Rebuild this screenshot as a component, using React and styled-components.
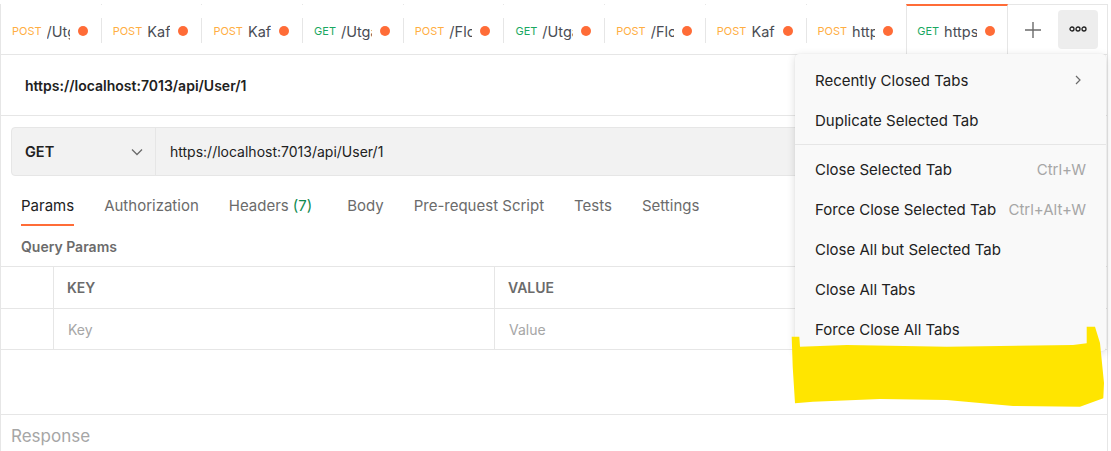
import React from 'react'
import styled, { createGlobalStyle } from 'styled-components'

const GlobalStyle = createGlobalStyle`
  body {
    margin: 0;
    background: #fff;
    font-family: Inter, "Noto Sans", sans-serif;
    color: #212121;
  }
  * { box-sizing: border-box; }
`

const Page = styled.div`
  position: relative;
  width: 1111px;
  height: 451px;
  overflow: hidden;
  padding-top: 4px;
  background: #fff;
`

const Frame = styled.div`
  width: 1108px;
  height: 447px;
  border-top: 1px solid #e6e6e6;
  border-left: 1px solid #e6e6e6;
  border-right: 1px solid #e6e6e6;
  display: flex;
  flex-direction: column;
`

const TabBar = styled.div`
  display: flex;
  align-items: stretch;
  height: 50px;
  flex: 0 0 50px;
  border-bottom: 1px solid #e6e6e6;
`

const Tab = styled.div`
  flex: 0 0 ${({ active }) => (active ? '101.7px' : '99.7px')};
  min-width: 0;
  overflow: hidden;
  display: flex;
  align-items: center;
  gap: 5px;
  padding: 2px 12px 0 10px;
  margin-top: -1px;
  border-top: 2px solid ${({ active }) => (active ? '#ff6c37' : 'transparent')};
  border-left: 1px solid ${({ active }) => (active ? '#e6e6e6' : 'transparent')};
  border-right: 1px solid ${({ active }) => (active ? '#e6e6e6' : 'transparent')};
  background: #fff;
`

const Separator = styled.div`
  flex: 0 0 1px;
  align-self: center;
  height: 25px;
  margin-top: 2px;
  background: #e6e6e6;
`

const Method = styled.span`
  flex: 0 0 auto;
  font-size: 11px;
  color: ${({ type }) => (type === 'GET' ? '#1aa861' : '#ffae42')};
`

const TabName = styled.span`
  flex: 1 1 0;
  min-width: 0;
  font-size: 14.5px;
  color: #4a4d55;
  white-space: nowrap;
  overflow: hidden;
`

const Dot = styled.span`
  flex: 0 0 10px;
  height: 10px;
  margin-left: 3px;
  border-radius: 50%;
  background: #ff6c37;
`

const PlusButton = styled.div`
  flex: 0 0 50px;
  display: flex;
  align-items: center;
  justify-content: center;
`

const MoreButton = styled.div`
  flex: 0 0 40px;
  height: 39px;
  align-self: center;
  margin-top: -1px;
  border-radius: 4px;
  background: #ededed;
  display: flex;
  align-items: center;
  justify-content: center;
`

const TitleRow = styled.div`
  flex: 0 0 61px;
  display: flex;
  align-items: center;
  padding-left: 24px;
  border-bottom: 1px solid #e6e6e6;
  font-size: 14px;
  font-weight: 600;
  color: #212121;
`

const UrlSection = styled.div`
  padding: 11px 11px 0 10px;
`

const UrlBar = styled.div`
  display: flex;
  height: 49px;
  border: 1px solid #e6e6e6;
  border-radius: 4px;
  background: #f2f2f2;
`

const MethodSelect = styled.div`
  flex: 0 0 144px;
  display: flex;
  align-items: center;
  justify-content: space-between;
  padding: 0 12px 0 13px;
  border-right: 1px solid #e6e6e6;
  font-size: 14.5px;
  font-weight: 600;
  color: #212121;
`

const UrlInput = styled.div`
  flex: 1;
  display: flex;
  align-items: center;
  padding-left: 14px;
  font-size: 14px;
  color: #212121;
`

const ReqTabs = styled.div`
  display: flex;
  gap: 30px;
  height: 40px;
  margin-top: 10px;
  padding-left: 20px;
`

const ReqTab = styled.div`
  display: flex;
  align-items: center;
  padding-top: 1px;
  font-size: 15px;
  color: ${({ active }) => (active ? '#212121' : '#6b6b6b')};
  border-bottom: 2px solid ${({ active }) => (active ? '#ff6c37' : 'transparent')};
  margin-right: ${({ extra }) => extra || 0}px;
`

const Count = styled.span`
  color: #0f8a4f;
  margin-left: 4px;
`

const SectionLabel = styled.div`
  height: 40px;
  display: flex;
  align-items: center;
  padding-left: 20px;
  padding-top: 1px;
  font-size: 14px;
  font-weight: 600;
  color: #6b6b6b;
`

const Table = styled.div`
  display: grid;
  grid-template-columns: 53px 441px 1fr;
  border-top: 1px solid #e6e6e6;
`

const Cell = styled.div`
  height: ${({ head }) => (head ? '42px' : '41px')};
  display: flex;
  align-items: center;
  padding-left: ${({ head }) => (head ? '13px' : '14px')};
  border-bottom: 1px solid #e6e6e6;
  border-right: ${({ last }) => (last ? 'none' : '1px solid #e6e6e6')};
  font-size: 14px;
  font-weight: ${({ head }) => (head ? 600 : 400)};
  color: ${({ head }) => (head ? '#6b6b6b' : '#a6a6a6')};
`

const Spacer = styled.div`
  flex: 0 0 64px;
`

const ResponsePane = styled.div`
  flex: 1;
  border-top: 1px solid #e6e6e6;
  display: flex;
  align-items: center;
  padding: 5px 0 0 10px;
  font-size: 17px;
  color: #a6a6a6;
`

const Menu = styled.div`
  position: absolute;
  left: 795px;
  top: 54px;
  width: 311px;
  padding: 6px 0 2px;
  background: #f9f9f9;
  border-radius: 4px;
  box-shadow: 0 2px 8px rgba(0, 0, 0, 0.14), 0 0 1px rgba(0, 0, 0, 0.12);
`

const MenuItem = styled.div`
  height: 40px;
  display: flex;
  align-items: center;
  justify-content: space-between;
  padding: 0 20px;
  font-size: 15px;
  color: #212121;
`

const Shortcut = styled.span`
  color: #a6a6a6;
`

const MenuDivider = styled.div`
  height: 1px;
  margin: 4px 0;
  background: #e6e6e6;
`

const Highlight = styled.svg`
  position: absolute;
  left: 0;
  top: 0;
  pointer-events: none;
`

const tabs = [
  { m: 'POST', n: '/Utgang' },
  { m: 'POST', n: 'Kafka' },
  { m: 'POST', n: 'Kafka' },
  { m: 'GET', n: '/Utgang' },
  { m: 'POST', n: '/Flow' },
  { m: 'GET', n: '/Utgang' },
  { m: 'POST', n: '/Flow' },
  { m: 'POST', n: 'Kafka' },
  { m: 'POST', n: 'https://localhost' },
  { m: 'GET', n: 'https://localhost', active: true },
]

const menuItems = [
  { label: 'Recently Closed Tabs', arrow: true },
  { label: 'Duplicate Selected Tab', divider: true },
  { label: 'Close Selected Tab', key: 'Ctrl+W' },
  { label: 'Force Close Selected Tab', key: 'Ctrl+Alt+W' },
  { label: 'Close All but Selected Tab' },
  { label: 'Close All Tabs' },
  { label: 'Force Close All Tabs' },
]

const App = () => {
  return (
    <Page>
      <GlobalStyle />
      <Frame>
        <TabBar>
          {tabs.map((t, i) => (
            <React.Fragment key={i}>
              {i > 0 && !t.active && <Separator />}
              <Tab active={t.active}>
                <Method type={t.m}>{t.m}</Method>
                <TabName>{t.n}</TabName>
                <Dot />
              </Tab>
            </React.Fragment>
          ))}
          <PlusButton>
            <svg width="18" height="18" viewBox="0 0 18 18">
              <path d="M9 1v16M1 9h16" stroke="#6b6b6b" strokeWidth="1.4" fill="none" />
            </svg>
          </PlusButton>
          <MoreButton>
            <svg width="20" height="6" viewBox="0 0 20 6">
              <circle cx="4" cy="3" r="2" stroke="#212121" strokeWidth="1.3" fill="none" />
              <circle cx="10" cy="3" r="2" stroke="#212121" strokeWidth="1.3" fill="none" />
              <circle cx="16" cy="3" r="2" stroke="#212121" strokeWidth="1.3" fill="none" />
            </svg>
          </MoreButton>
        </TabBar>

        <TitleRow>https://localhost:7013/api/User/1</TitleRow>

        <UrlSection>
          <UrlBar>
            <MethodSelect>
              GET
              <svg width="12" height="8" viewBox="0 0 12 8">
                <path d="M1 1.5l5 5 5-5" stroke="#6b6b6b" strokeWidth="1.3" fill="none" />
              </svg>
            </MethodSelect>
            <UrlInput>https://localhost:7013/api/User/1</UrlInput>
          </UrlBar>
        </UrlSection>

        <ReqTabs>
          <ReqTab active>Params</ReqTab>
          <ReqTab>Authorization</ReqTab>
          <ReqTab extra={5}>Headers<Count>(7)</Count></ReqTab>
          <ReqTab>Body</ReqTab>
          <ReqTab>Pre-request Script</ReqTab>
          <ReqTab>Tests</ReqTab>
          <ReqTab>Settings</ReqTab>
        </ReqTabs>

        <SectionLabel>Query Params</SectionLabel>

        <Table>
          <Cell head />
          <Cell head>KEY</Cell>
          <Cell head last>VALUE</Cell>
          <Cell />
          <Cell>Key</Cell>
          <Cell last>Value</Cell>
        </Table>

        <Spacer />

        <ResponsePane>Response</ResponsePane>
      </Frame>

      <Menu>
        {menuItems.map((item) => (
          <React.Fragment key={item.label}>
            <MenuItem>
              <span>{item.label}</span>
              {item.key && <Shortcut>{item.key}</Shortcut>}
              {item.arrow && (
                <svg width="8" height="10" viewBox="0 0 8 10" style={{ marginRight: 4 }}>
                  <path d="M2 1l4 4-4 4" stroke="#6b6b6b" strokeWidth="1.2" fill="none" />
                </svg>
              )}
            </MenuItem>
            {item.divider && <MenuDivider />}
          </React.Fragment>
        ))}
      </Menu>

      <Highlight width="1111" height="451" viewBox="0 0 1111 451">
        <path
          d="M791.7 336.7 L799.3 336.7 L800 346.7 L846.7 345 L946.7 346.7 L1073 345 L1086.7 343.3 L1086.7 326.7 L1095 326.7 L1100 343 L1104 383 L1103.3 398.3 L1080 406.7 L1013 406 L946.7 400 L880 399 L813 401.7 L795 403.3 L792.7 366.7 Z"
          fill="#ffe500"
        />
      </Highlight>
    </Page>
  )
}

export default App
